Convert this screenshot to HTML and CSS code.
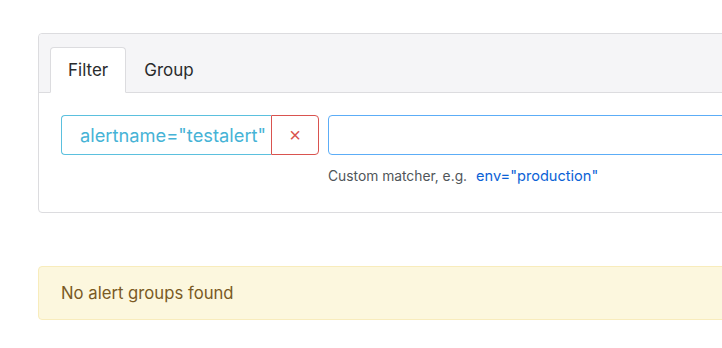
FILE: index.html
```html
<!DOCTYPE html>
<html>
<head>
<meta charset="utf-8">
<link rel="stylesheet" href="styles.css">
</head>
<body>
<div class="page">
  <div class="card">
    <div class="card-header">
      <ul class="tabs">
        <li class="tab active">Filter</li>
        <li class="tab">Group</li>
      </ul>
    </div>
    <div class="card-body">
      <div class="filter-row">
        <div class="matcher">
          <span class="matcher-text">alertname="testalert"</span>
          <button class="matcher-remove">×</button>
        </div>
        <div class="custom">
          <div class="custom-input"></div>
          <div class="help">Custom matcher, e.g. <span class="example">env="production"</span></div>
        </div>
      </div>
    </div>
  </div>
  <div class="alert">No alert groups found</div>
</div>
</body>
</html>
```

FILE: styles.css
```css
html, body {
  margin: 0;
  padding: 0;
  overflow: hidden;
  background: #fff;
}
body {
  font-family: Inter, "Liberation Sans", Arial, sans-serif;
  font-size: 17px;
  color: #292b2c;
}
.page {
  width: 1100px;
  padding: 33px 0 0 38px;
}
.card {
  border: 1px solid #dcdcdf;
  border-radius: 4px;
}
.card-header {
  background: #f5f5f7;
  border-bottom: 1px solid #dcdcdf;
  padding: 13px 11px 0;
  border-radius: 4px 4px 0 0;
}
.tabs {
  list-style: none;
  margin: 0 0 -1px;
  padding: 0;
  display: flex;
}
.tab {
  height: 46px;
  box-sizing: border-box;
  padding: 0 17px;
  display: flex;
  align-items: center;
  border: 1px solid transparent;
  border-radius: 4px 4px 0 0;
  color: #292b2c;
}
.tab.active {
  background: #fff;
  border-color: #dcdcdf #dcdcdf #fff;
}
.card-body {
  padding: 22px 22px 27px;
}
.filter-row {
  display: flex;
  gap: 9px;
  align-items: flex-start;
}
.matcher {
  display: flex;
  height: 40px;
  box-sizing: border-box;
}
.matcher-text {
  display: flex;
  align-items: center;
  width: 210px;
  box-sizing: border-box;
  padding: 0 0 0 18px;
  border: 1px solid #5bc0de;
  border-right: none;
  border-radius: 4px 0 0 4px;
  color: #46b3d6;
  font-size: 18.3px;
  white-space: nowrap;
}
.matcher-remove {
  width: 48px;
  height: 40px;
  border: 1px solid #d9534f;
  border-radius: 0 4px 4px 0;
  background: #fff;
  color: #d9534f;
  font-family: "Liberation Sans", Arial, sans-serif;
  font-size: 20px;
  padding: 0;
  display: flex;
  align-items: center;
  justify-content: center;
}
.custom {
  flex: 1;
}
.custom-input {
  height: 40px;
  box-sizing: border-box;
  border: 1px solid #5cadf7;
  border-radius: 4px;
}
.help {
  margin-top: 12px;
  font-size: 13.8px;
  color: #4f5559;
  white-space: nowrap;
}
.example {
  color: #0b62d6;
  margin-left: 5px;
  font-size: 14.6px;
}
.alert {
  margin-top: 53px;
  background: #fcf7de;
  border: 1px solid #f8ecbc;
  border-radius: 4px;
  color: #7a5a24;
  padding: 0 22px;
  height: 54px;
  box-sizing: border-box;
  display: flex;
  align-items: center;
  font-size: 16.7px;
}
```
